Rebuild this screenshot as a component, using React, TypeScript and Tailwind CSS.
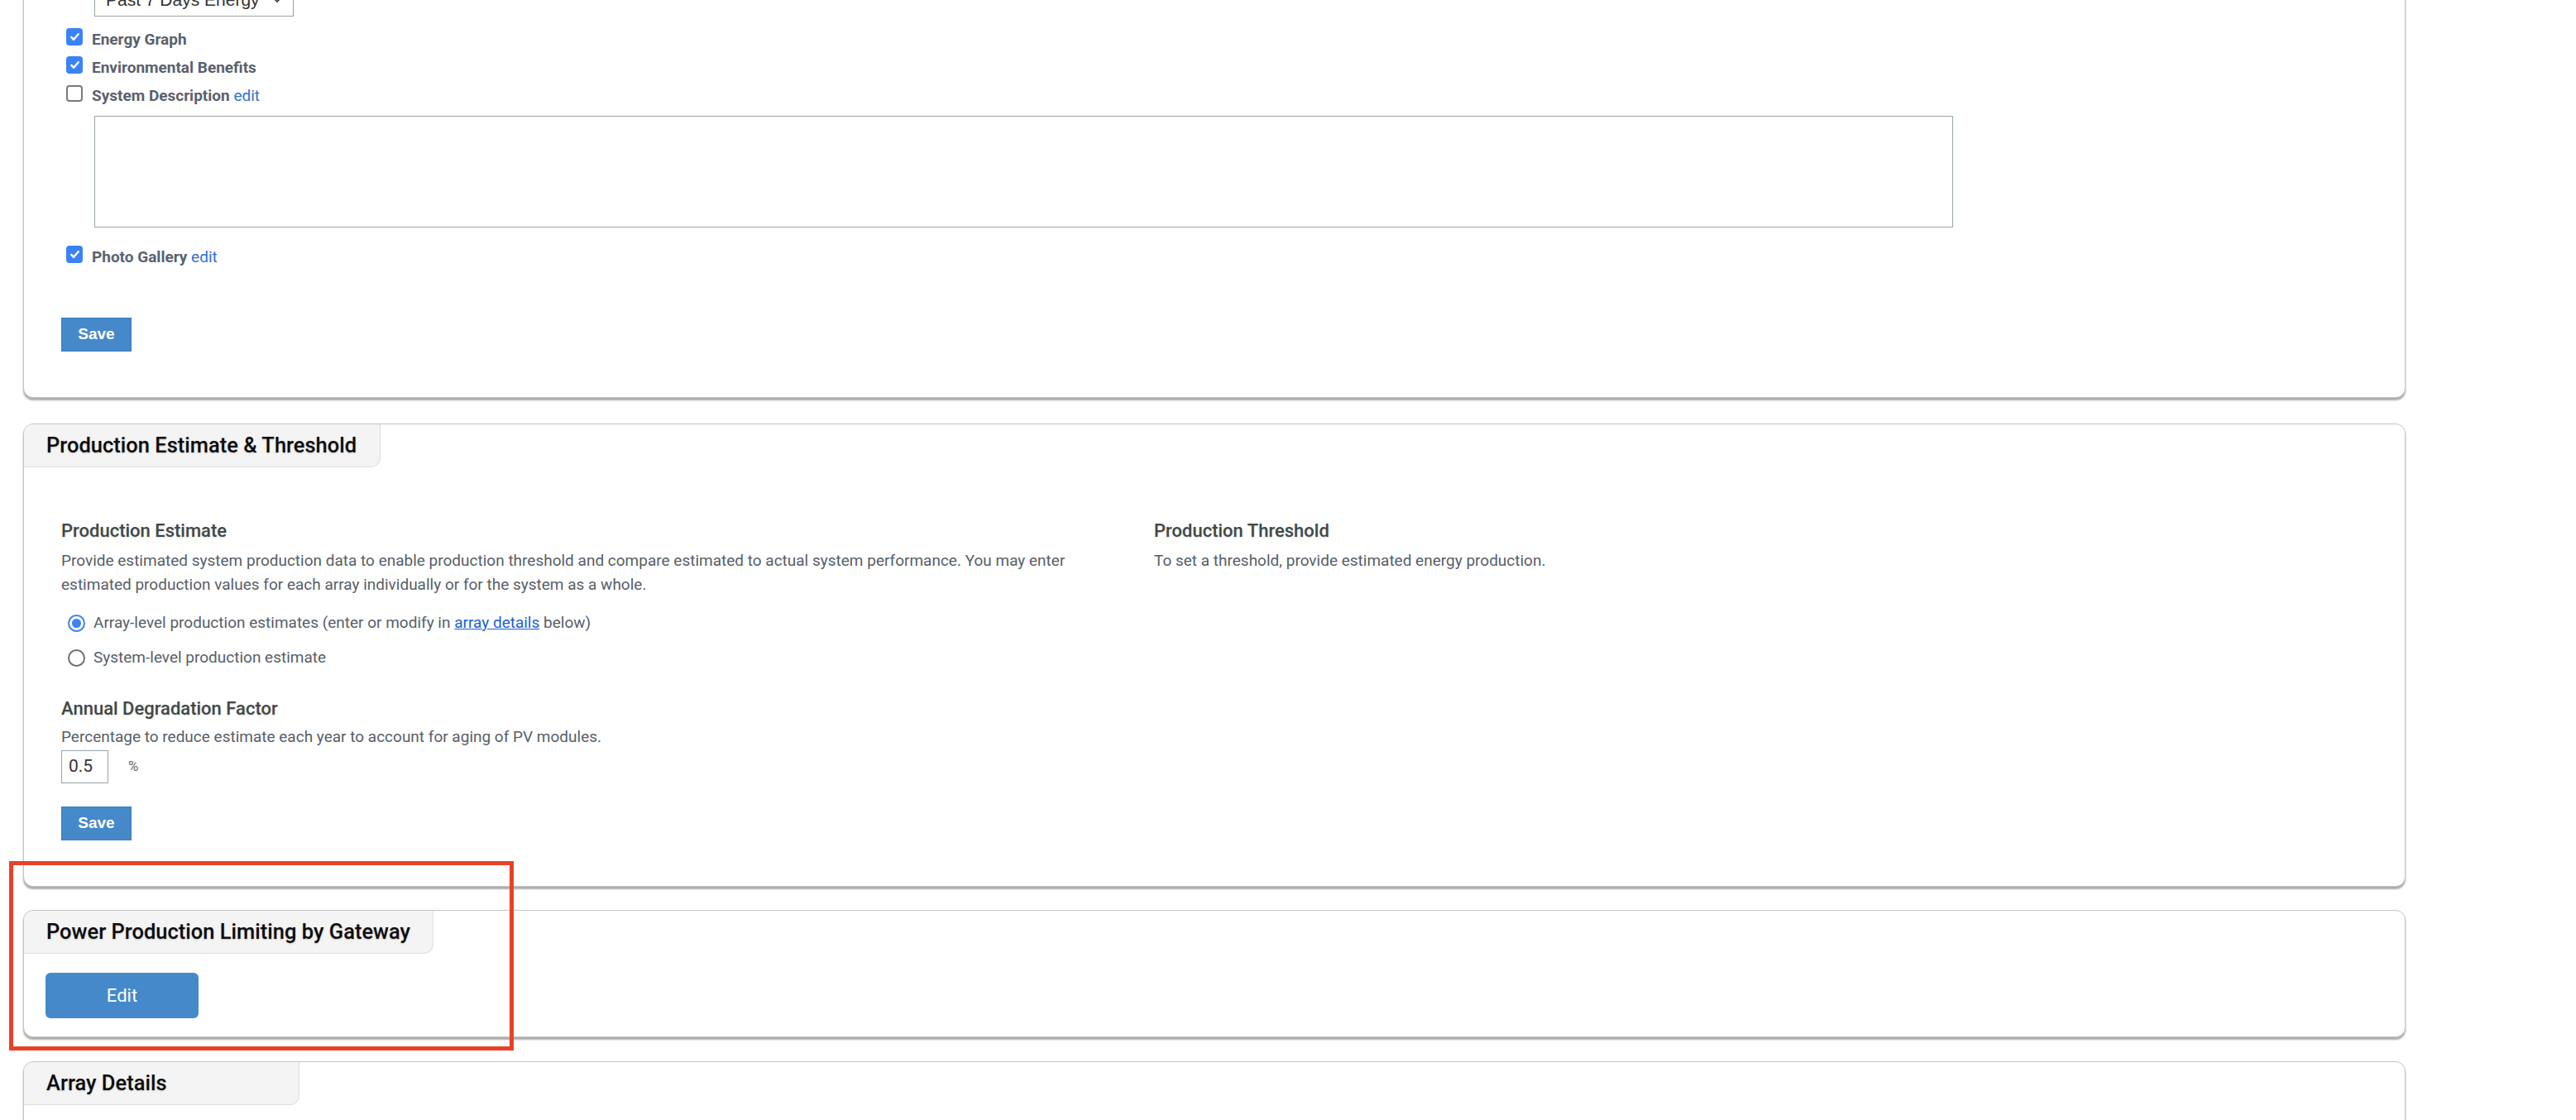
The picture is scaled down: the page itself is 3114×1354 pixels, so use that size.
import React from "react"

function CheckBox({ checked }: { checked: boolean }) {
  if (!checked) {
    return <span className="mt-[4px] h-[20px] w-[20px] shrink-0 rounded-[4px] border-2 border-[#7a7a7a] bg-white" />
  }
  return (
    <span className="mt-[3px] flex h-[21px] w-[20px] shrink-0 items-center justify-center rounded-[4px] bg-[#3b82f6]">
      <svg viewBox="0 0 16 16" className="h-[15px] w-[15px]" fill="none" stroke="white" strokeWidth="2.6" strokeLinecap="round" strokeLinejoin="round">
        <path d="M3.5 8.5l3 3 6-7" />
      </svg>
    </span>
  )
}

function Radio({ checked }: { checked: boolean }) {
  if (!checked) {
    return <span className="h-[21px] w-[21px] shrink-0 rounded-full border-2 border-[#6f6f6f] bg-white" />
  }
  return (
    <span className="flex h-[21px] w-[21px] shrink-0 items-center justify-center rounded-full border-[2.5px] border-[#3b82f6] bg-white">
      <span className="h-[11px] w-[11px] rounded-full bg-[#3b82f6]" />
    </span>
  )
}

function CheckRow({ label, checked, edit }: { label: string; checked: boolean; edit?: boolean }) {
  return (
    <div className="flex h-[34px] items-start gap-[11px] pl-[6px]">
      <CheckBox checked={checked} />
      <span className="text-[19px] font-bold leading-[34px] text-[#59616d]">
        {label}
        {edit && <span className="font-normal text-[#2f6fd0]"> edit</span>}
      </span>
    </div>
  )
}

function SaveButton({ className = "" }: { className?: string }) {
  return (
    <button className={`${className} block h-[41px] w-[85px] border border-[#3b7cc0] bg-[#4589cb] font-['Liberation_Sans',Arial,sans-serif] text-[19px] font-bold text-white`}>
      Save
    </button>
  )
}

function Tab({ title, width }: { title: string; width: string }) {
  return (
    <div className={`${width} flex h-[52px] items-center rounded-tl-[12px] rounded-br-[12px] border-b border-r border-[#dcdcdc] bg-[#f4f4f4] px-[27px]`}>
      <h2 className="whitespace-nowrap text-[25.5px] font-medium text-[#0d0d0d] [text-shadow:0_1px_2px_rgba(0,0,0,0.2)]">{title}</h2>
    </div>
  )
}

const card = "rounded-[12px] border border-[#c4c4c4] bg-white shadow-[0_3px_2px_rgba(0,0,0,0.33)]"
const subhead = "text-[22px] font-medium leading-[29px] text-[#414947] [text-shadow:0_1px_2px_rgba(0,0,0,0.15)]"

export default function App() {
  return (
    <div className="h-[1354px] w-[3114px] overflow-hidden bg-white pl-[28px] font-['Roboto',sans-serif]">
      <div className="flex w-[2880px] flex-col">
        {/* Public profile settings, top is scrolled off */}
        <section className={`${card} -mt-[61px] pb-[55px] pl-[45px] pt-[40px]`}>
          <div className="ml-[40px] flex h-[40px] w-[241px] items-center justify-between border border-[#9aa3a3] pl-[13px] pr-[14px] font-['Liberation_Sans',Arial,sans-serif] text-[21px] text-[#333]">
            <span>Past 7 Days Energy</span>
            <svg viewBox="0 0 10 6" className="h-[6px] w-[10px]" fill="none" stroke="#333" strokeWidth="1.6">
              <path d="M1 1l4 4 4-4" />
            </svg>
          </div>
          <div className="mt-[11px] flex flex-col">
            <CheckRow label="Energy Graph" checked />
            <CheckRow label="Environmental Benefits" checked />
            <CheckRow label="System Description" checked={false} edit />
          </div>
          <textarea className="ml-[40px] mt-[7px] block h-[135px] w-[2247px] resize-none border border-[#9aa5a5] outline-none" />
          <div className="mt-[19px]">
            <CheckRow label="Photo Gallery" checked edit />
          </div>
          <SaveButton className="mt-[56px]" />
        </section>

        <section className={`${card} mt-[31px] pb-[55px]`}>
          <Tab title="Production Estimate & Threshold" width="w-[431px]" />
          <div className="mt-[62px] flex pl-[45px] text-[#575e68]">
            <div className="w-[1291px]">
              <h3 className={subhead}>Production Estimate</h3>
              <p className="mt-[8px] text-[19px] leading-[28.5px]">
                Provide estimated system production data to enable production threshold and compare estimated to actual system performance. You may enter estimated production values for each array individually or for the system as a whole.
              </p>
              <div className="mt-[11px] flex flex-col">
                <label className="flex h-[42px] items-center gap-[10px] pl-[8px] text-[19px]">
                  <Radio checked />
                  <span>
                    Array-level production estimates (enter or modify in{" "}
                    <a className="text-[#1a5fd8] underline">array details</a> below)
                  </span>
                </label>
                <label className="flex h-[42px] items-center gap-[10px] pl-[8px] text-[19px]">
                  <Radio checked={false} />
                  <span>System-level production estimate</span>
                </label>
              </div>
              <h3 className={`${subhead} mt-[26px]`}>Annual Degradation Factor</h3>
              <p className="mt-[6px] text-[19px] leading-[28.5px]">
                Percentage to reduce estimate each year to account for aging of PV modules.
              </p>
              <div className="mt-[1px] flex items-center gap-[24px]">
                <div className="flex h-[40px] w-[57px] items-center border border-[#9aa5a5] pl-[8px] text-[21px] text-[#333]">0.5</div>
                <span className="text-[17px] text-[#666]">%</span>
              </div>
              <SaveButton className="mt-[28px]" />
            </div>
            <div className="ml-[30px]">
              <h3 className={subhead}>Production Threshold</h3>
              <p className="mt-[8px] text-[19px] leading-[28.5px]">To set a threshold, provide estimated energy production.</p>
            </div>
          </div>
        </section>

        <section className={`${card} relative mt-[28px] pb-[22px]`}>
          <Tab title="Power Production Limiting by Gateway" width="w-[495px]" />
          <button className="ml-[26px] mt-[23px] block h-[55px] w-[185px] rounded-[6px] bg-[#4589cb] text-[22px] text-white">Edit</button>
          {/* annotation frame */}
          <div className="pointer-events-none absolute -left-[18px] -top-[60px] h-[229px] w-[610px] border-[5px] border-[#e8412a]" />
        </section>

        <section className={`${card} mt-[29px] h-[200px]`}>
          <Tab title="Array Details" width="w-[333px]" />
        </section>
      </div>
    </div>
  )
}
